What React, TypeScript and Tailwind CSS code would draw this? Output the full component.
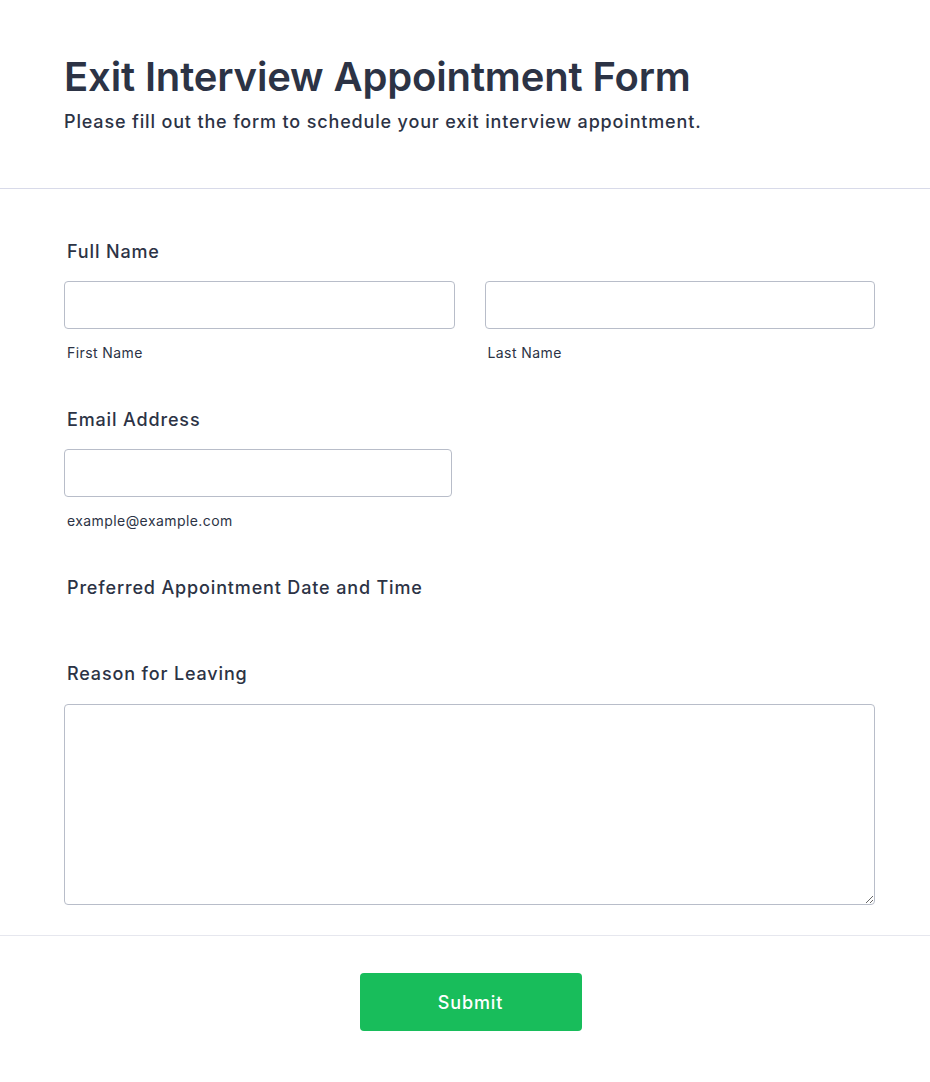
import React from 'react';

const font = { fontFamily: 'Inter, "Noto Sans", sans-serif' };

const Label: React.FC<{ children: React.ReactNode }> = ({ children }) => (
    <div className="pl-[3px] text-[18px] leading-[24px] font-medium tracking-[0.85px] text-[#2c3345]">{children}</div>
);

const SubLabel: React.FC<{ children: React.ReactNode }> = ({ children }) => (
    <div className="mt-[14px] pl-[3px] text-[14px] leading-[20px] tracking-[0.42px] text-[#2c3345]">{children}</div>
);

const TextInput: React.FC<{ className?: string }> = ({ className = '' }) => (
    <input
        type="text"
        className={`block h-[48px] rounded-[4px] border border-[#b8bdc9] bg-white px-3 text-[16px] outline-none ${className}`}
    />
);

const App: React.FC = () => {
    return (
        <div className="min-h-screen bg-white text-[#2c3345]" style={font}>
            {/* Header */}
            <div className="px-[64px] pt-[53px] pb-[54px]">
                <h1 className="text-[40px] leading-[48px] font-semibold tracking-[-0.15px] text-[#2c3345]">
                    Exit Interview Appointment Form
                </h1>
                <p className="mt-[9px] text-[18px] leading-[24px] font-medium tracking-[0.84px] text-[#2c3345]">
                    Please fill out the form to schedule your exit interview appointment.
                </p>
            </div>
            <div className="h-px bg-[#d8dae9]" />

            {/* Fields */}
            <div className="pl-[64px] pr-[55px] pt-[51px]">
                <Label>Full Name</Label>
                <div className="mt-[17px] grid grid-cols-2 gap-[30px]">
                    <div>
                        <TextInput className="w-full" />
                        <SubLabel>First Name</SubLabel>
                    </div>
                    <div>
                        <TextInput className="w-full" />
                        <SubLabel>Last Name</SubLabel>
                    </div>
                </div>

                <div className="mt-[45px]">
                    <Label>Email Address</Label>
                    <TextInput className="mt-[17px] w-[388px]" />
                    <SubLabel>example@example.com</SubLabel>
                </div>

                <div className="mt-[45px]">
                    <Label>Preferred Appointment Date and Time</Label>
                </div>

                <div className="mt-[62px]">
                    <Label>Reason for Leaving</Label>
                    <textarea className="mt-[18px] block h-[201px] w-full rounded-[4px] border border-[#b8bdc9] bg-white p-3 text-[16px] outline-none" />
                </div>
            </div>

            <div className="mt-[30px] h-px bg-[#e6e7ee]" />

            {/* Submit */}
            <div className="flex justify-center pt-[37px] pb-[50px] pl-[11px]">
                <button className="h-[58px] w-[222px] rounded-[4px] bg-[#18bd5b] text-[18px] font-medium tracking-[0.9px] text-white">
                    Submit
                </button>
            </div>
        </div>
    );
};

export default App;
